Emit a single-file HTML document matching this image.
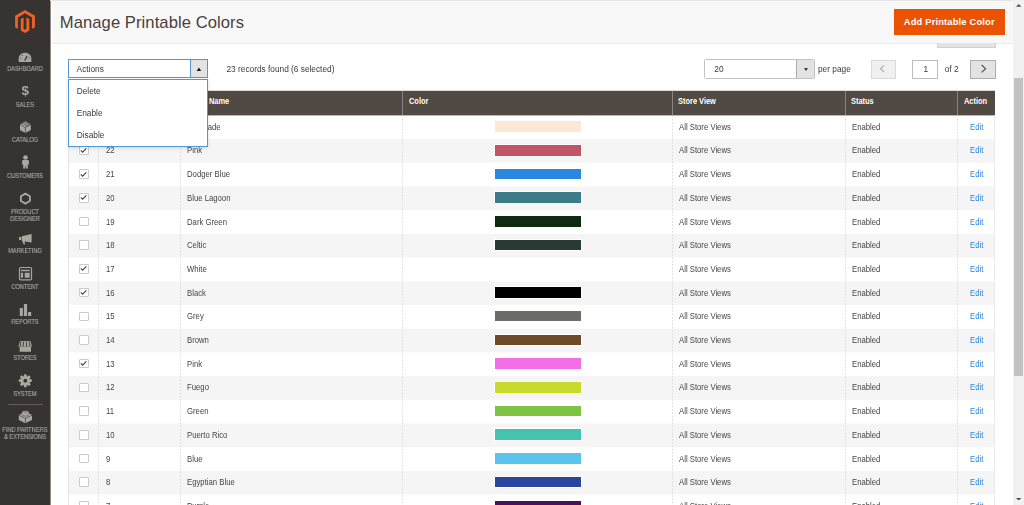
<!DOCTYPE html>
<html><head><meta charset="utf-8">
<style>
*{box-sizing:border-box;margin:0;padding:0}
html,body{width:1024px;height:505px;overflow:hidden;background:#fff;font-family:"Liberation Sans",sans-serif;color:#303030}
.abs{position:absolute}
#side{position:absolute;left:0;top:0;width:50px;height:505px;background:#373330}
.lbl{position:absolute;left:-10px;width:70px;text-align:center;color:#aaa6a0;font-size:6.5px;line-height:6px;white-space:nowrap;transform:scaleX(0.87);font-weight:normal;will-change:transform;-webkit-text-stroke:0.15px #aaa6a0}
#hdr{position:absolute;left:51.5px;top:0;width:961.5px;height:44px;background:#f8f8f8;border-bottom:1px solid #ebebeb}
#title{position:absolute;left:59.8px;font-size:16.6px;line-height:24px;color:#4a403a;white-space:nowrap;letter-spacing:0.07px}
#addbtn{position:absolute;left:894px;top:9px;width:111px;height:26px;background:#eb5202;color:#fff;font-weight:bold;font-size:9.4px;line-height:26.2px;text-align:center;white-space:nowrap;letter-spacing:0.15px;text-indent:-0.5px}
.t{position:absolute;white-space:nowrap;font-size:8.3px;line-height:10px;color:#3a3a3a}
#scroll{position:absolute;left:1013px;top:0;width:11px;height:505px;background:#f1f1f1}
#thumb{position:absolute;left:1014.3px;top:78.2px;width:8.5px;height:297.5px;background:#c1c1c1}
.row{position:absolute;left:68px;width:927px;height:23.7px}
.tb{font-size:8.6px;transform:scaleX(0.9);transform-origin:0 0;color:#454545}
.th{font-size:8.5px;transform:scaleX(0.875);transform-origin:0 0;color:#fff;font-weight:bold}
.cb{position:absolute;left:79px;width:9.5px;height:9.5px;border:1px solid #cbcbcb;background:#fff;border-radius:1px}
.sw{position:absolute;left:494.7px;width:86.4px;height:10.5px;box-shadow:0 0 0 1px #fff}
.vd{position:absolute;width:1px;background:repeating-linear-gradient(to bottom,#d9d9d9 0,#d9d9d9 1.8px,transparent 1.8px,transparent 3.3px)}
</style></head><body>
<div id="side">

<svg class="abs" style="left:15px;top:10px" width="20" height="23" viewBox="0 0 43.068 50"><path fill="#ee6226" d="M21.555 0L0 12.5v25l6.154 3.558V16.06l15.38-8.893 15.384 8.894v25l6.15-3.56V12.5z"/><path fill="#ee6226" d="M24.633 41.054l-3.077 1.78-3.08-1.78V16.06l-6.154 3.56v25.002L21.556 50l9.232-5.378V19.618l-6.155-3.558z"/></svg>
<svg class="abs" style="left:0;top:0" width="50" height="505" viewBox="0 0 50 505">
<path fill="#aaa6a0" d="M18.7 62V58.6C18.7 55.2 21.5 52.7 25.05 52.7S31.4 55.2 31.4 58.6V62Z"/>
<path stroke="#373330" stroke-width="1.2" stroke-linecap="round" d="M24.9 60.2L26.9 56.4"/>
<circle cx="22.4" cy="55.3" r="0.5" fill="#373330"/><circle cx="20.6" cy="58.1" r="0.5" fill="#373330"/><circle cx="29.3" cy="58.1" r="0.5" fill="#373330"/>
<path fill="#aaa6a0" d="M25.35 121.2L30.8 124.4V130L25.35 133.1L19.95 130V124.4Z"/>
<path fill="none" stroke="#373330" stroke-width="0.65" d="M19.95 124.4L25.35 127.4L30.8 124.4M25.35 127.4V133M22.2 123.1L27.7 126.1M24.2 122L29.7 125"/>
<circle cx="25.5" cy="157.5" r="2.35" fill="#aaa6a0"/>
<path fill="#aaa6a0" d="M22.1 161.2Q22.1 160 23.3 160H27.7Q28.9 160 28.9 161.2V164.6H27.8V168.6H25.8V166.2H25.2V168.6H23.2V164.6H22.1Z"/>
<path fill="none" stroke="#aaa6a0" stroke-width="1.8" d="M25.37 193.6L29.9 196.2V201L25.37 203.6L20.9 201V196.2Z"/>
<path fill="#aaa6a0" d="M19 236.9H21.2V239.9H19ZM21.8 236.3L31.6 234V242.5L21.8 241ZM22.3 241H24.4L25.1 244.3L23.6 244.6Z"/>
<rect x="19.5" y="267.5" width="12" height="12.3" rx="1.3" fill="none" stroke="#aaa6a0" stroke-width="1.2"/>
<path fill="#aaa6a0" d="M20.9 269.7H29.7V271.3H20.9ZM20.9 272.7H23.1V277.8H20.9ZM24.7 272.7H29.7V277.8H24.7Z"/>
<path fill="#aaa6a0" d="M19.75 307.9H22.9V316H19.75ZM23.9 303.9H27.1V316H23.9ZM28.1 311.9H31.2V316H28.1Z"/>
<path fill="#aaa6a0" d="M20.1 341.1H30.4L32 346.7H18.2ZM19.6 347.1H31V351.8H19.6Z"/>
<path fill="none" stroke="#373330" stroke-width="0.9" d="M21 341.5L20 346.5M23.7 341.5L23.1 346.5M26.4 341.5L26.5 346.5M29.1 341.5L30 346.5"/>

<path fill="#aaa6a0" fill-rule="evenodd" d="M23.68 376.39 L24.18 374.20 L26.42 374.20 L26.92 376.39 L27.20 376.51 L29.11 375.31 L30.69 376.89 L29.49 378.80 L29.61 379.08 L31.80 379.58 L31.80 381.82 L29.61 382.32 L29.49 382.60 L30.69 384.51 L29.11 386.09 L27.20 384.89 L26.92 385.01 L26.42 387.20 L24.18 387.20 L23.68 385.01 L23.40 384.89 L21.49 386.09 L19.91 384.51 L21.11 382.60 L20.99 382.32 L18.80 381.82 L18.80 379.58 L20.99 379.08 L21.11 378.80 L19.91 376.89 L21.49 375.31 L23.40 376.51 Z M25.30 378.80 a1.9 1.9 0 1 0 0.01 0Z"/>
<rect x="8.3" y="404" width="34.7" height="1" fill="#665d57"/>
<path fill="#aaa6a0" d="M18.8 415L25.4 411.4L32 415V420L25.4 423.2L18.8 420Z"/>
<path fill="none" stroke="#373330" stroke-width="0.6" d="M18.8 415.2L25.4 418.4L32 415.2M25.4 418.4V423"/>
<ellipse cx="25.4" cy="414.5" rx="3.2" ry="1.5" fill="none" stroke="#373330" stroke-width="0.7"/>
<path fill="#aaa6a0" d="M22.2 412.3V414A3.2 1.5 0 0 0 28.6 414V412.3Z"/>
<ellipse cx="25.4" cy="412.3" rx="3.2" ry="1.5" fill="#aaa6a0"/>
<ellipse cx="25.4" cy="412.3" rx="1.6" ry="0.7" fill="none" stroke="#373330" stroke-width="0.4" opacity="0.6"/>
</svg>
<div class="lbl" style="top:65.90px">DASHBOARD</div>
<div class="lbl" style="top:101.60px">SALES</div>
<div class="lbl" style="top:137.20px">CATALOG</div>
<div class="lbl" style="top:172.90px">CUSTOMERS</div>
<div class="lbl" style="top:208.50px">PRODUCT</div>
<div class="lbl" style="top:216.30px">DESIGNER</div>
<div class="lbl" style="top:248.10px">MARKETING</div>
<div class="lbl" style="top:284.00px">CONTENT</div>
<div class="lbl" style="top:319.10px">REPORTS</div>
<div class="lbl" style="top:354.90px">STORES</div>
<div class="lbl" style="top:391.00px">SYSTEM</div>
<div class="lbl" style="top:426.90px">FIND PARTNERS</div>
<div class="lbl" style="top:434.30px">&amp; EXTENSIONS</div>
<div class="abs" style="left:21px;top:83px;width:8.5px;font-size:13.5px;line-height:16px;font-weight:bold;color:#aaa6a0;text-align:center;will-change:transform">$</div>
</div>
<div class="abs" style="left:50px;top:0;width:1px;height:505px;background:#8f8c89"></div>
<div id="hdr"></div><div class="abs" style="left:50px;top:0;width:963px;height:1px;background:#e6e6e6"></div>
<div id="title" style="top:10.93px">Manage Printable Colors</div>
<div id="addbtn">Add Printable Color</div>
<svg class="abs" style="left:0;top:0" width="1024" height="505" viewBox="0 0 1024 505"><rect x="68" y="90.8" width="927" height="24.6" fill="#514943"/><rect x="402" y="90.8" width="1" height="24.6" fill="#8a837f"/><rect x="672" y="90.8" width="1" height="24.6" fill="#8a837f"/><rect x="845" y="90.8" width="1" height="24.6" fill="#8a837f"/><rect x="957" y="90.8" width="1" height="24.6" fill="#8a837f"/><rect x="69" y="139.10" width="925" height="23.7" fill="#f5f5f5"/><rect x="69" y="186.50" width="925" height="23.7" fill="#f5f5f5"/><rect x="69" y="233.90" width="925" height="23.7" fill="#f5f5f5"/><rect x="69" y="281.30" width="925" height="23.7" fill="#f5f5f5"/><rect x="69" y="328.70" width="925" height="23.7" fill="#f5f5f5"/><rect x="69" y="376.10" width="925" height="23.7" fill="#f5f5f5"/><rect x="69" y="423.50" width="925" height="23.7" fill="#f5f5f5"/><rect x="69" y="470.90" width="925" height="23.7" fill="#f5f5f5"/><rect x="68" y="115.4" width="1" height="400" fill="#e3e3e3"/><rect x="994" y="115.4" width="1" height="400" fill="#ebebeb"/><line x1="98.5" y1="115.4" x2="98.5" y2="505" stroke="#dedede" stroke-width="1" stroke-dasharray="1.8 1.5"/><line x1="180.5" y1="115.4" x2="180.5" y2="505" stroke="#dedede" stroke-width="1" stroke-dasharray="1.8 1.5"/><line x1="402.5" y1="115.4" x2="402.5" y2="505" stroke="#dedede" stroke-width="1" stroke-dasharray="1.8 1.5"/><line x1="672.5" y1="115.4" x2="672.5" y2="505" stroke="#dedede" stroke-width="1" stroke-dasharray="1.8 1.5"/><line x1="845.5" y1="115.4" x2="845.5" y2="505" stroke="#dedede" stroke-width="1" stroke-dasharray="1.8 1.5"/><line x1="957.5" y1="115.4" x2="957.5" y2="505" stroke="#dedede" stroke-width="1" stroke-dasharray="1.8 1.5"/></svg>
<div class="t th" style="left:208.7px;top:96.17px">Name</div>
<div class="t th" style="left:408.7px;top:96.17px">Color</div>
<div class="t th" style="left:678.2px;top:96.17px">Store View</div>
<div class="t th" style="left:851.2px;top:96.17px">Status</div>
<div class="t th" style="left:963.8px;top:96.17px">Action</div>
<div class="cb" style="top:121.90px"></div>
<div class="t tb" style="left:105.5px;top:121.72px">23</div>
<div class="t tb" style="left:187px;top:121.72px">Serenade</div>
<div class="sw" style="top:121.30px;background:#fde8d8"></div>
<div class="t tb" style="left:679px;top:121.72px">All Store Views</div>
<div class="t tb" style="left:851.5px;top:121.72px">Enabled</div>
<div class="t tb" style="left:970px;top:121.72px;color:#2b86dc">Edit</div>
<div class="cb" style="top:145.60px"></div>
<svg class="abs" style="left:79.4px;top:145.90px" width="9" height="9" viewBox="0 0 9 9"><path d="M1.8 4.3L3.6 6.1L7.4 2.4" fill="none" stroke="#4a423d" stroke-width="1.15"/></svg>
<div class="t tb" style="left:105.5px;top:145.42px">22</div>
<div class="t tb" style="left:187px;top:145.42px">Pink</div>
<div class="sw" style="top:145.00px;background:#c25565"></div>
<div class="t tb" style="left:679px;top:145.42px">All Store Views</div>
<div class="t tb" style="left:851.5px;top:145.42px">Enabled</div>
<div class="t tb" style="left:970px;top:145.42px;color:#2b86dc">Edit</div>
<div class="cb" style="top:169.30px"></div>
<svg class="abs" style="left:79.4px;top:169.60px" width="9" height="9" viewBox="0 0 9 9"><path d="M1.8 4.3L3.6 6.1L7.4 2.4" fill="none" stroke="#4a423d" stroke-width="1.15"/></svg>
<div class="t tb" style="left:105.5px;top:169.12px">21</div>
<div class="t tb" style="left:187px;top:169.12px">Dodger Blue</div>
<div class="sw" style="top:168.70px;background:#2a88de"></div>
<div class="t tb" style="left:679px;top:169.12px">All Store Views</div>
<div class="t tb" style="left:851.5px;top:169.12px">Enabled</div>
<div class="t tb" style="left:970px;top:169.12px;color:#2b86dc">Edit</div>
<div class="cb" style="top:193.00px"></div>
<svg class="abs" style="left:79.4px;top:193.30px" width="9" height="9" viewBox="0 0 9 9"><path d="M1.8 4.3L3.6 6.1L7.4 2.4" fill="none" stroke="#4a423d" stroke-width="1.15"/></svg>
<div class="t tb" style="left:105.5px;top:192.82px">20</div>
<div class="t tb" style="left:187px;top:192.82px">Blue Lagoon</div>
<div class="sw" style="top:192.40px;background:#3c7b88"></div>
<div class="t tb" style="left:679px;top:192.82px">All Store Views</div>
<div class="t tb" style="left:851.5px;top:192.82px">Enabled</div>
<div class="t tb" style="left:970px;top:192.82px;color:#2b86dc">Edit</div>
<div class="cb" style="top:216.70px"></div>
<div class="t tb" style="left:105.5px;top:216.52px">19</div>
<div class="t tb" style="left:187px;top:216.52px">Dark Green</div>
<div class="sw" style="top:216.10px;background:#0f2b0f"></div>
<div class="t tb" style="left:679px;top:216.52px">All Store Views</div>
<div class="t tb" style="left:851.5px;top:216.52px">Enabled</div>
<div class="t tb" style="left:970px;top:216.52px;color:#2b86dc">Edit</div>
<div class="cb" style="top:240.40px"></div>
<div class="t tb" style="left:105.5px;top:240.22px">18</div>
<div class="t tb" style="left:187px;top:240.22px">Celtic</div>
<div class="sw" style="top:239.80px;background:#293b33"></div>
<div class="t tb" style="left:679px;top:240.22px">All Store Views</div>
<div class="t tb" style="left:851.5px;top:240.22px">Enabled</div>
<div class="t tb" style="left:970px;top:240.22px;color:#2b86dc">Edit</div>
<div class="cb" style="top:264.10px"></div>
<svg class="abs" style="left:79.4px;top:264.40px" width="9" height="9" viewBox="0 0 9 9"><path d="M1.8 4.3L3.6 6.1L7.4 2.4" fill="none" stroke="#4a423d" stroke-width="1.15"/></svg>
<div class="t tb" style="left:105.5px;top:263.92px">17</div>
<div class="t tb" style="left:187px;top:263.92px">White</div>
<div class="t tb" style="left:679px;top:263.92px">All Store Views</div>
<div class="t tb" style="left:851.5px;top:263.92px">Enabled</div>
<div class="t tb" style="left:970px;top:263.92px;color:#2b86dc">Edit</div>
<div class="cb" style="top:287.80px"></div>
<svg class="abs" style="left:79.4px;top:288.10px" width="9" height="9" viewBox="0 0 9 9"><path d="M1.8 4.3L3.6 6.1L7.4 2.4" fill="none" stroke="#4a423d" stroke-width="1.15"/></svg>
<div class="t tb" style="left:105.5px;top:287.62px">16</div>
<div class="t tb" style="left:187px;top:287.62px">Black</div>
<div class="sw" style="top:287.20px;background:#000000"></div>
<div class="t tb" style="left:679px;top:287.62px">All Store Views</div>
<div class="t tb" style="left:851.5px;top:287.62px">Enabled</div>
<div class="t tb" style="left:970px;top:287.62px;color:#2b86dc">Edit</div>
<div class="cb" style="top:311.50px"></div>
<div class="t tb" style="left:105.5px;top:311.32px">15</div>
<div class="t tb" style="left:187px;top:311.32px">Grey</div>
<div class="sw" style="top:310.90px;background:#6c6c69"></div>
<div class="t tb" style="left:679px;top:311.32px">All Store Views</div>
<div class="t tb" style="left:851.5px;top:311.32px">Enabled</div>
<div class="t tb" style="left:970px;top:311.32px;color:#2b86dc">Edit</div>
<div class="cb" style="top:335.20px"></div>
<div class="t tb" style="left:105.5px;top:335.02px">14</div>
<div class="t tb" style="left:187px;top:335.02px">Brown</div>
<div class="sw" style="top:334.60px;background:#6d4b28"></div>
<div class="t tb" style="left:679px;top:335.02px">All Store Views</div>
<div class="t tb" style="left:851.5px;top:335.02px">Enabled</div>
<div class="t tb" style="left:970px;top:335.02px;color:#2b86dc">Edit</div>
<div class="cb" style="top:358.90px"></div>
<svg class="abs" style="left:79.4px;top:359.20px" width="9" height="9" viewBox="0 0 9 9"><path d="M1.8 4.3L3.6 6.1L7.4 2.4" fill="none" stroke="#4a423d" stroke-width="1.15"/></svg>
<div class="t tb" style="left:105.5px;top:358.72px">13</div>
<div class="t tb" style="left:187px;top:358.72px">Pink</div>
<div class="sw" style="top:358.30px;background:#f26fe5"></div>
<div class="t tb" style="left:679px;top:358.72px">All Store Views</div>
<div class="t tb" style="left:851.5px;top:358.72px">Enabled</div>
<div class="t tb" style="left:970px;top:358.72px;color:#2b86dc">Edit</div>
<div class="cb" style="top:382.60px"></div>
<div class="t tb" style="left:105.5px;top:382.42px">12</div>
<div class="t tb" style="left:187px;top:382.42px">Fuego</div>
<div class="sw" style="top:382.00px;background:#c9d92b"></div>
<div class="t tb" style="left:679px;top:382.42px">All Store Views</div>
<div class="t tb" style="left:851.5px;top:382.42px">Enabled</div>
<div class="t tb" style="left:970px;top:382.42px;color:#2b86dc">Edit</div>
<div class="cb" style="top:406.30px"></div>
<div class="t tb" style="left:105.5px;top:406.12px">11</div>
<div class="t tb" style="left:187px;top:406.12px">Green</div>
<div class="sw" style="top:405.70px;background:#7ec442"></div>
<div class="t tb" style="left:679px;top:406.12px">All Store Views</div>
<div class="t tb" style="left:851.5px;top:406.12px">Enabled</div>
<div class="t tb" style="left:970px;top:406.12px;color:#2b86dc">Edit</div>
<div class="cb" style="top:430.00px"></div>
<div class="t tb" style="left:105.5px;top:429.82px">10</div>
<div class="t tb" style="left:187px;top:429.82px">Puerto Rico</div>
<div class="sw" style="top:429.40px;background:#46c3af"></div>
<div class="t tb" style="left:679px;top:429.82px">All Store Views</div>
<div class="t tb" style="left:851.5px;top:429.82px">Enabled</div>
<div class="t tb" style="left:970px;top:429.82px;color:#2b86dc">Edit</div>
<div class="cb" style="top:453.70px"></div>
<div class="t tb" style="left:105.5px;top:453.52px">9</div>
<div class="t tb" style="left:187px;top:453.52px">Blue</div>
<div class="sw" style="top:453.10px;background:#5cc4ec"></div>
<div class="t tb" style="left:679px;top:453.52px">All Store Views</div>
<div class="t tb" style="left:851.5px;top:453.52px">Enabled</div>
<div class="t tb" style="left:970px;top:453.52px;color:#2b86dc">Edit</div>
<div class="cb" style="top:477.40px"></div>
<div class="t tb" style="left:105.5px;top:477.22px">8</div>
<div class="t tb" style="left:187px;top:477.22px">Egyptian Blue</div>
<div class="sw" style="top:476.80px;background:#2b459f"></div>
<div class="t tb" style="left:679px;top:477.22px">All Store Views</div>
<div class="t tb" style="left:851.5px;top:477.22px">Enabled</div>
<div class="t tb" style="left:970px;top:477.22px;color:#2b86dc">Edit</div>
<div class="cb" style="top:501.10px"></div>
<div class="t tb" style="left:105.5px;top:500.92px">7</div>
<div class="t tb" style="left:187px;top:500.92px">Purple</div>
<div class="sw" style="top:500.50px;background:#4a1060"></div>
<div class="t tb" style="left:679px;top:500.92px">All Store Views</div>
<div class="t tb" style="left:851.5px;top:500.92px">Enabled</div>
<div class="t tb" style="left:970px;top:500.92px;color:#2b86dc">Edit</div>
<div class="abs" style="left:937.3px;top:43px;width:58.4px;height:4.5px;background:#e3e3e3;border:1px solid #d2d2d2;border-top:none;border-radius:0 0 1px 1px"></div>
<div class="t" style="left:226.5px;top:64.07px;">23 records found (6 selected)</div>
<div class="abs" style="left:704px;top:59px;width:111px;height:20px;border:1px solid #c2c2c2;border-radius:1.5px;background:#fff"></div>
<div class="abs" style="left:796px;top:60px;width:18px;height:18px;background:#e3e3e3;border-left:1px solid #adadad"></div>
<svg class="abs" style="left:803px;top:67px" width="6" height="5" viewBox="0 0 6 5"><path d="M1 1.3H5L3 3.8Z" fill="#1a1a1a"/></svg>
<div class="t" style="left:714.3px;top:64.37px;">20</div>
<div class="t" style="left:818px;top:64.07px;">per page</div>
<div class="abs" style="left:871px;top:60px;width:25px;height:19px;background:#f0f0f0;border:1px solid #d9d9d9"></div>
<svg class="abs" style="left:878px;top:64px" width="8" height="10" viewBox="0 0 8 10"><path d="M6.1 1.4L2.5 4.7L6.1 8" fill="none" stroke="#b0b0b0" stroke-width="1.2"/></svg>
<div class="abs" style="left:912px;top:60px;width:26px;height:19px;background:#fff;border:1px solid #bdbdbd"></div>
<div class="t" style="left:923.5px;top:63.97px;">1</div>
<div class="t" style="left:944.7px;top:64.27px;">of 2</div>
<div class="abs" style="left:970px;top:60px;width:26px;height:19px;background:#e3e3e3;border:1px solid #adadad"></div>
<svg class="abs" style="left:979px;top:64px" width="8" height="10" viewBox="0 0 8 10"><path d="M2.6 1L6.6 4.7L2.6 8.4" fill="none" stroke="#514943" stroke-width="1.1"/></svg>
<div class="abs" style="left:68px;top:59px;width:140px;height:19px;border:1px solid #4f98de;background:#fff"></div>
<div class="abs" style="left:190px;top:60px;width:17px;height:17px;background:#e3e3e3;border-left:1px solid #4f98de"></div>
<svg class="abs" style="left:196px;top:67px" width="6" height="5" viewBox="0 0 6 5"><path d="M0.6 4.1H5.2L2.9 0.5Z" fill="#1a1a1a"/></svg>
<div class="t" style="left:76.6px;top:64.07px;">Actions</div>
<div class="abs" style="left:68px;top:79px;width:140px;height:68px;border:1px solid #4f98de;background:#fff;box-shadow:0 1px 4px rgba(0,0,0,.13)"></div>
<div class="t" style="left:76.7px;top:85.67px;">Delete</div>
<div class="t" style="left:76.7px;top:107.57px;">Enable</div>
<div class="t" style="left:76.7px;top:130.17px;">Disable</div>
<div id="scroll"></div><div id="thumb"></div>
<svg class="abs" style="left:1015.9px;top:4.4px" width="5.5" height="2.8" viewBox="0 0 5.5 2.8"><path d="M0 2.8L2.75 0L5.5 2.8z" fill="#505050"/></svg>
<svg class="abs" style="left:1016px;top:497.6px" width="5.4" height="2.7" viewBox="0 0 5.4 2.7"><path d="M0 0L2.7 2.7L5.4 0z" fill="#505050"/></svg>
</body></html>
